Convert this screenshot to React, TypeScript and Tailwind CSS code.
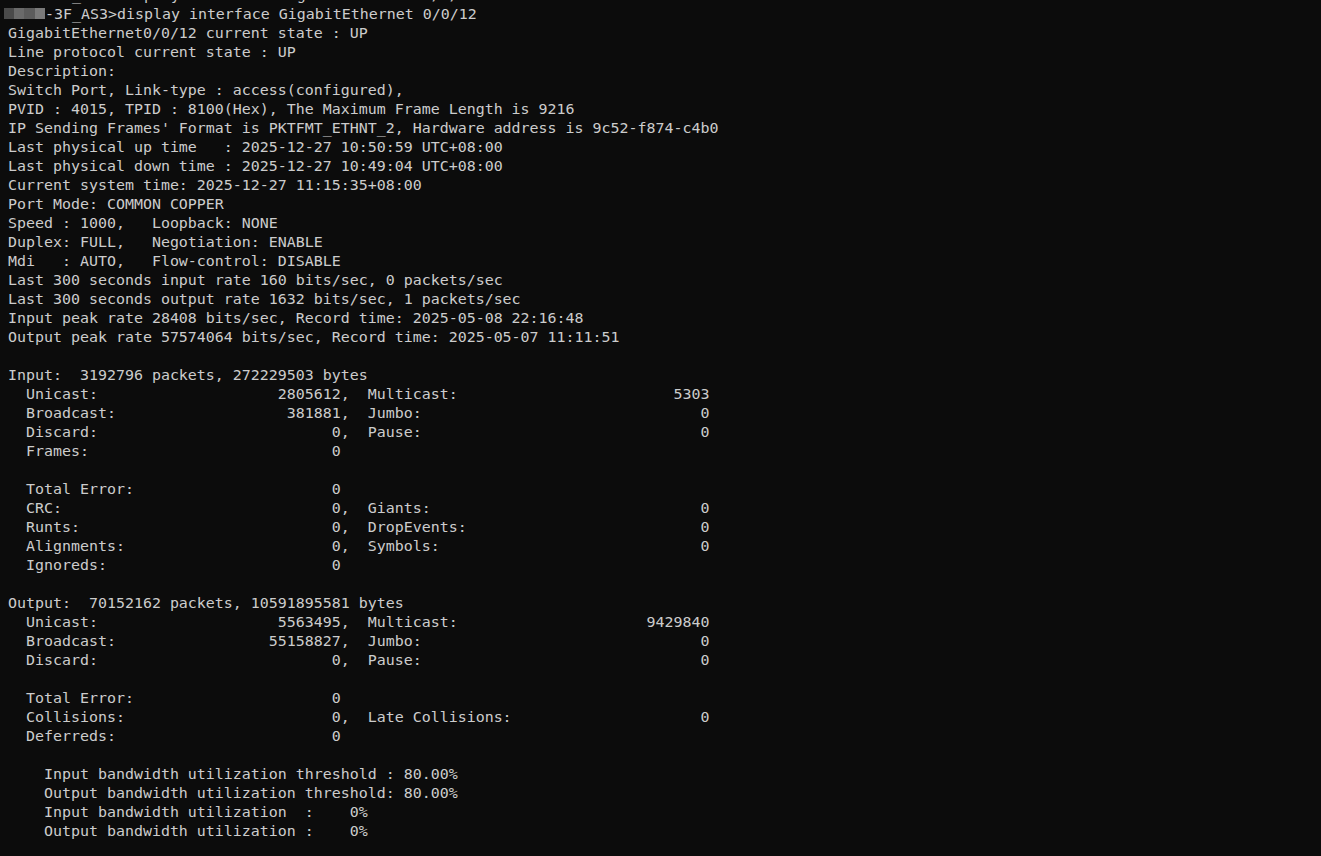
import React from 'react';

const L = 37;
const W = 78;

function row(label: string, value: string, rLabel?: string, rValue?: string) {
  const left = '  ' + label;
  let s = left + value.padStart(L - left.length);
  if (rLabel !== undefined && rValue !== undefined) {
    s += ',  ' + rLabel;
    s += rValue.padStart(W - s.length);
  }
  return s;
}

const lines: string[] = [
  '__HOST__',
  '__HOST__',
  'GigabitEthernet0/0/12 current state : UP',
  'Line protocol current state : UP',
  'Description:',
  'Switch Port, Link-type : access(configured),',
  'PVID : 4015, TPID : 8100(Hex), The Maximum Frame Length is 9216',
  "IP Sending Frames' Format is PKTFMT_ETHNT_2, Hardware address is 9c52-f874-c4b0",
  'Last physical up time   : 2025-12-27 10:50:59 UTC+08:00',
  'Last physical down time : 2025-12-27 10:49:04 UTC+08:00',
  'Current system time: 2025-12-27 11:15:35+08:00',
  'Port Mode: COMMON COPPER',
  'Speed : 1000,   Loopback: NONE',
  'Duplex: FULL,   Negotiation: ENABLE',
  'Mdi   : AUTO,   Flow-control: DISABLE',
  'Last 300 seconds input rate 160 bits/sec, 0 packets/sec',
  'Last 300 seconds output rate 1632 bits/sec, 1 packets/sec',
  'Input peak rate 28408 bits/sec, Record time: 2025-05-08 22:16:48',
  'Output peak rate 57574064 bits/sec, Record time: 2025-05-07 11:11:51',
  '',
  'Input:  3192796 packets, 272229503 bytes',
  row('Unicast:', '2805612', 'Multicast:', '5303'),
  row('Broadcast:', '381881', 'Jumbo:', '0'),
  row('Discard:', '0', 'Pause:', '0'),
  row('Frames:', '0'),
  '',
  row('Total Error:', '0'),
  row('CRC:', '0', 'Giants:', '0'),
  row('Runts:', '0', 'DropEvents:', '0'),
  row('Alignments:', '0', 'Symbols:', '0'),
  row('Ignoreds:', '0'),
  '',
  'Output:  70152162 packets, 10591895581 bytes',
  row('Unicast:', '5563495', 'Multicast:', '9429840'),
  row('Broadcast:', '55158827', 'Jumbo:', '0'),
  row('Discard:', '0', 'Pause:', '0'),
  '',
  row('Total Error:', '0'),
  row('Collisions:', '0', 'Late Collisions:', '0'),
  row('Deferreds:', '0'),
  '',
  '    Input bandwidth utilization threshold : 80.00%',
  '    Output bandwidth utilization threshold: 80.00%',
  '    Input bandwidth utilization  :    0%',
  '    Output bandwidth utilization :    0%',
];

// hostname is pixelated in the screenshot
function Masked() {
  return (
    <span className="inline-flex h-[11px] w-[41px] ml-[-4px] align-[0px]">
      <span className="h-full w-[10px] bg-[#4a4a4a]" />
      <span className="h-full w-[10px] bg-[#6a6a6a]" />
      <span className="h-full w-[11px] bg-[#5c5c5c]" />
      <span className="h-full w-[10px] bg-[#7a7a7a]" />
    </span>
  );
}

export default function App() {
  return (
    <div className="h-[856px] w-full overflow-hidden bg-[#0c0c0c]">
      <pre
        className="mt-[-14px] pl-2 text-[14.95px] leading-[19px] text-[#cccccc] whitespace-pre"
        style={{ fontFamily: '"DejaVu Sans Mono", "Liberation Mono", monospace' }}
      >
        {lines.map((ln, i) =>
          ln === '__HOST__' ? (
            <div key={i} className="h-[19px]">
              <Masked />
              <span>{'-3F_AS3>display interface GigabitEthernet 0/0/12'}</span>
            </div>
          ) : (
            <div key={i} className="h-[19px]">
              {ln}
            </div>
          )
        )}
      </pre>
    </div>
  );
}
